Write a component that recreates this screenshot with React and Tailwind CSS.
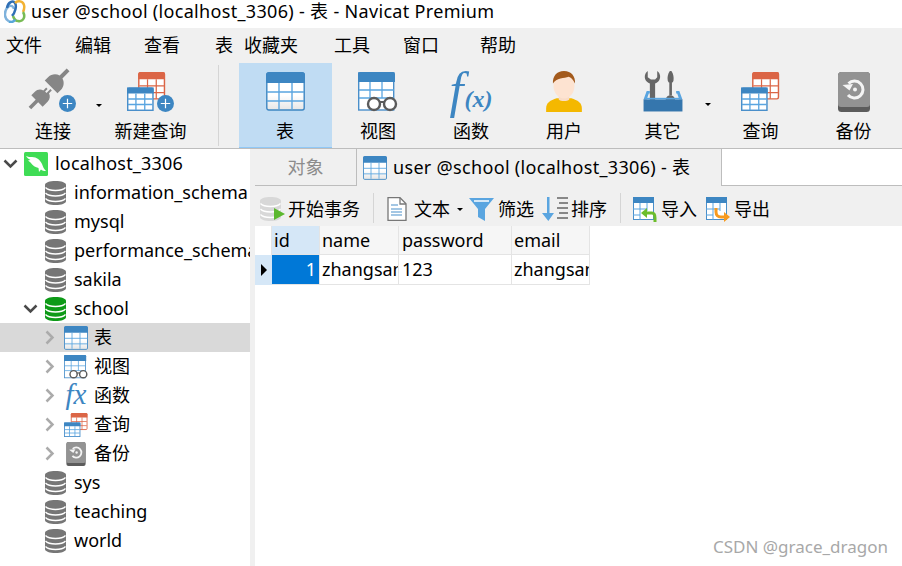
const TableIcon = ({ size = 39, color = "#3d86c2", line = "#5aa5e0" }) => (
  <svg width={size} height={size} viewBox="0 0 39 39" className="shrink-0">
    <defs>
      <linearGradient id="tableFill" x1="0" y1="0" x2="0" y2="1">
        <stop offset="0.6" stopColor="#ffffff" />
        <stop offset="1" stopColor="#e6e6e6" />
      </linearGradient>
    </defs>
    <rect x="0.8" y="1" width="37.4" height="37" rx="2" fill="url(#tableFill)" stroke={color} strokeWidth="1.4" />
    <path d="M0 11V3a3 3 0 0 1 3-3h33a3 3 0 0 1 3 3v8z" fill={color} />
    <path d="M13 11v26M26 11v26M1 20h37M1 29h37" stroke={line} strokeWidth="1.4" fill="none" />
  </svg>
);

const QueryIcon = ({ size = 38 }) => (
  <svg width={size} height={size} viewBox="0 0 38 38" className="shrink-0">
    <rect x="11.5" y="0.7" width="25" height="25.5" fill="#fff" stroke="#db6546" strokeWidth="1.4" rx="1.5" />
    <path d="M11 7V2a2 2 0 0 1 2-2h22a2 2 0 0 1 2 2v5z" fill="#db6546" />
    <path d="M20 7v19M28.500 7v19M12 13.500h24M12 20h24" stroke="#db6546" strokeWidth="1.2" fill="none" />
    <rect x="0.7" y="15.700" width="24.600" height="21.600" fill="#fff" stroke="#4a8fca" strokeWidth="1.4" />
    <path d="M0 21v-4a2 2 0 0 1 2-2h22a2 2 0 0 1 2 2v4z" fill="#3d86c2" />
    <path d="M8.700 21v16M17.300 21v16M1 26.300h24M1 31.700h24" stroke="#5aa5e0" strokeWidth="1.3" fill="none" />
  </svg>
);

const PlusBadge = ({ className = "" }) => (
  <svg width="17" height="17" viewBox="0 0 17 17" className={className}>
    <circle cx="8.500" cy="8.500" r="8.500" fill="#3d86c2" />
    <path d="M8.500 3.800v9.400M3.800 8.500h9.400" stroke="#fff" strokeWidth="1.2" />
  </svg>
);

const PlugIcon = () => (
  <svg width="46" height="42" viewBox="0 0 46 42" className="overflow-visible">
    <g transform="translate(19 17) rotate(-45)" fill="#868686">
      <rect x="-27" y="-1.800" width="11" height="3.600" />
      <path d="M-17-8h5c3.500 0 6 2 7 5h4v2h-3.500v2H1v2h-4c-1 3-3.500 5-7 5h-7z" />
      <path d="M3-9h5c4 0 8 3 9 7h10v4H17c-1 4-5 7-9 7H3z" />
    </g>
  </svg>
);

const GlassesIcon = ({ size = 40 }) => (
  <svg width={size} height={size} viewBox="0 0 40 40" className="shrink-0">
    <rect x="0.700" y="1" width="35" height="37" fill="#fff" stroke="#4a8fca" strokeWidth="1.4" />
    <path d="M0 10V2a2 2 0 0 1 2-2h33a2 2 0 0 1 2 2v8z" fill="#3d86c2" />
    <path d="M12 10v28M24 10v16M1 18h35M1 26h35" stroke="#5aa5e0" strokeWidth="1.3" fill="none" />
    <circle cx="16" cy="32" r="6" fill="#fff" stroke="#5b5b5b" strokeWidth="2.400" />
    <circle cx="32" cy="32" r="6" fill="#fff" stroke="#5b5b5b" strokeWidth="2.400" />
    <path d="M21 30h6" stroke="#5b5b5b" strokeWidth="2" />
  </svg>
);

const UserIcon = () => (
  <svg width="36" height="41" viewBox="0 0 34 39">
    <path d="M0 36c0-6 4-8 10-10h14c6 2 10 4 10 10v3H0z" fill="#f4b800" />
    <path d="M12 21h10v6c-2 2-8 2-10 0z" fill="#f8dcc8" />
    <ellipse cx="17" cy="14" rx="10" ry="12" fill="#fde3d1" />
    <path d="M6.500 12C6 5 10 0 17 0s11 5 10.500 12c-2-4-4-6-6-6.500-4 1.500-12 1-15 6.500z" fill="#a35a1c" />
  </svg>
);

const ToolsIcon = () => (
  <svg width="40" height="41" viewBox="0 0 37 39">
    <path d="M4 0C1 2 0 7 3 10c1 1 2 1.500 3 2v16h5V12c1-.5 2-1 3-2 3-3 2-8-1-10v6l-2 2H7L4 6z" fill="#666" />
    <path d="M25 0c-2 3-2.500 6-2 9 .3 1 1 2 1.500 2v12H27V11c.6 0 1.300-1 1.500-2 .4-3 0-6-2-9z" fill="#666" />
    <path d="M21 28c0-3 2-5 4.500-5s4.500 2 4.500 5z" fill="#666" />
    <path d="M0 27l3-8h3v2.500H5L3 27zM37 27l-3-8h-3v2.500h1l2 5.500z" fill="#5aa5e0" />
    <rect x="0" y="27" width="37" height="11.500" fill="#3576ad" />
    <rect x="3" y="25.500" width="31" height="1.500" fill="#5aa5e0" />
  </svg>
);

const BackupIcon = ({ width = 32, height = 40 }) => (
  <svg width={width} height={height} viewBox="0 0 32 40" className="shrink-0">
    <rect x="0" y="0" width="32" height="40" rx="3.500" fill="#5c5c5c" />
    <path d="M0 3.500A3.500 3.500 0 0 1 3.500 0h25A3.500 3.500 0 0 1 32 3.500V32a3 3 0 0 1-3 3H3a3 3 0 0 1-3-3z" fill="#939393" />
    <path d="M10.500 11.500a8.500 8.500 0 1 1-.5 11.500" fill="none" stroke="#f4f4f4" strokeWidth="3" />
    <path d="M4.500 13l7 5.500 3.500-6.500z" fill="#f4f4f4" />
    <circle cx="17" cy="17.500" r="2" fill="#f4f4f4" />
  </svg>
);

const DbIcon = ({ color = "#767676" }) => (
  <svg width="21" height="24" viewBox="0 0 21 24" className="shrink-0">
    <path d="M0 4c0-2.500 4.700-4 10.500-4S21 1.500 21 4v16c0 2.500-4.700 4-10.500 4S0 22.500 0 20z" fill={color} />
    <path d="M0.500 6.500c2 2.200 6 3 10 3s8-.8 10-3M0.500 12c2 2.200 6 3 10 3s8-.8 10-3M0.500 17.500c2 2.200 6 3 10 3s8-.8 10-3" fill="none" stroke="#fff" strokeWidth="1.300" />
  </svg>
);

const ChevronDown = () => (
  <svg width="15" height="10" viewBox="0 0 15 10" className="shrink-0">
    <path d="M1.500 1.500L7.500 7.500l6-6" fill="none" stroke="#4a4a4a" strokeWidth="2.500" />
  </svg>
);

const ChevronRight = () => (
  <svg width="10" height="15" viewBox="0 0 10 15" className="shrink-0">
    <path d="M1.500 1.500l6 6-6 6" fill="none" stroke="#ababab" strokeWidth="2.500" />
  </svg>
);

const Caret = () => <span className="w-0 h-0 border-x-[3px] border-x-transparent border-t-[3px] border-t-black" />;

const NavicatLogo = () => (
  <svg width="22" height="23" viewBox="0 0 22 23">
    <path d="M5 21.500C0 19 0 12 3 8c2-3 6-3 7 1" fill="none" stroke="#7fb2dc" strokeWidth="2.500" />
    <path d="M3 8C4 2 9 0 11 3c2 3 0 10-3 13" fill="none" stroke="#2f6fb5" strokeWidth="2.500" />
    <path d="M11 3c3-3 8-2 9 2 .5 2 0 5-1 7" fill="none" stroke="#f2b233" strokeWidth="2.500" />
    <path d="M19 12c3 5 0 10-5 9-2 0-4-2-5-5" fill="none" stroke="#78bb55" strokeWidth="2.500" />
    <path d="M5 21.500c3 1 5 0 6-2" fill="none" stroke="#58a6d8" strokeWidth="2.500" />
  </svg>
);

const Dolphin = () => (
  <svg width="24" height="24" viewBox="0 0 24 24" className="shrink-0">
    <rect width="24" height="24" rx="1.500" fill="#3fdc55" />
    <path d="M2 4c2 1 4 1 6 1 5 0 8 3 10 7 1 3 2 5 4 7-2 0-4-.5-5-1.500l-2 2.500-.5-4c-3-.5-6-2.500-8-5.500L4 8.500l2.500-.5C5 7 3 6 2 4z" fill="#fff" />
  </svg>
);

const tools = [
  { label: "表", width: "w-[93px]", icon: <TableIcon />, active: true },
  { label: "视图", width: "w-[93px]", icon: <GlassesIcon /> },
  {
    label: "函数",
    width: "w-[93px]",
    icon: (
      <span className="flex items-baseline h-[39px] font-['Liberation_Serif',serif] italic text-[#3d86c2] leading-[36px]">
        <span className="text-[50px]">f</span>
        <span className="text-[24px] ml-[1px] font-bold">(x)</span>
      </span>
    ),
  },
  { label: "用户", width: "w-[93px]", icon: <UserIcon /> },
  { label: "其它", width: "w-[104px]", icon: <ToolsIcon />, caret: true },
  { label: "查询", width: "w-[92px]", icon: <QueryIcon size={39} /> },
  { label: "备份", width: "w-[94px]", icon: <BackupIcon /> },
];

const ToolButton = ({ label, width, icon, active, caret }) => (
  <div className={`relative flex flex-col items-center h-[85px] pt-[9px] pr-[1px] ${width} ${active ? "bg-[#c0dcf3] border-b border-b-[#90c8f6]" : ""}`}>
    <div className="flex items-center justify-center h-[39px]">{icon}</div>
    <span className="mt-[8px] leading-[24px]">{label}</span>
    {caret && (
      <span className="absolute right-[4px] top-[40px] flex">
        <Caret />
      </span>
    )}
  </div>
);

const DbRow = ({ name, color, open }) => (
  <div className="flex items-center h-[29px]">
    <span className="flex shrink-0 justify-center w-[45px] pl-[15px]">{open && <ChevronDown />}</span>
    <DbIcon color={color} />
    <span className="ml-[8px] mb-[2px] whitespace-nowrap">{name}</span>
  </div>
);

const SubRow = ({ icon, name, selected }) => (
  <div className={`flex items-center h-[29px] ${selected ? "bg-[#d9d9d9]" : ""}`}>
    <span className="flex shrink-0 justify-center w-[64px] pl-[36px]">
      <ChevronRight />
    </span>
    <span className="flex shrink-0 justify-center w-[24px]">{icon}</span>
    <span className="ml-[6px] mb-[2px]">{name}</span>
  </div>
);

const ImportIcon = ({ arrow, d, head }) => (
  <span className="relative flex w-[24px] h-[24px]">
    <svg width="24" height="24" viewBox="0 0 24 24">
      <rect x="0.500" y="0.500" width="20" height="22" fill="#fff" stroke="#4a8fca" />
      <path d="M0 6V0h21v6z" fill="#3d86c2" />
      <path d="M7 6v17M14 6v8M0 12h14M0 18h7" stroke="#5aa5e0" fill="none" />
    </svg>
    <svg width="16" height="14" viewBox="0 0 16 14" className="absolute right-[0px] bottom-[-1px]">
      <path d={d} fill="none" stroke={arrow} strokeWidth="3" />
      <path d={head} fill={arrow} />
    </svg>
  </span>
);

const gridCell = "border-r border-b border-[#e4e4e4]";

export default function App() {
  return (
    <div className="relative w-[902px] h-[566px] overflow-hidden bg-white text-[18px] text-black font-['Noto_Sans','Noto_Sans_CJK_SC',sans-serif]">
      <div className="flex items-start h-[28px] bg-white">
        <span className="ml-[4px] flex"><NavicatLogo /></span>
        <span className="ml-[5px] -mt-[1px] leading-[24px] tracking-[0.32px] whitespace-nowrap">user @school (localhost_3306) - 表 - Navicat Premium</span>
      </div>

      <div className="flex items-center h-[35px] bg-[#f0f0f0] pb-[1px]">
        <span className="ml-[6px]">文件</span>
        <span className="ml-[33px]">编辑</span>
        <span className="ml-[33px]">查看</span>
        <span className="ml-[35px]">表</span>
        <span className="ml-[11px]">收藏夹</span>
        <span className="ml-[36px]">工具</span>
        <span className="ml-[33px]">窗口</span>
        <span className="ml-[41px]">帮助</span>
      </div>

      <div className="flex h-[86px] bg-[#f0f0f0] border-b border-b-[#bdbdbd]">
        <div className="relative flex flex-col items-center w-[92px] h-[85px] pt-[9px] pl-[14px]">
          <div className="relative h-[39px] w-[46px]">
            <PlugIcon />
            <PlusBadge className="absolute left-[29px] top-[23px]" />
          </div>
          <span className="mt-[8px] leading-[24px]">连接</span>
        </div>
        <span className="flex mt-[41px] ml-[4px] w-[14px]"><Caret /></span>
        <div className="flex flex-col items-center w-[82px] h-[85px] pt-[9px]">
          <div className="relative h-[39px] w-[48px]">
            <QueryIcon size={39} />
            <PlusBadge className="absolute left-[30px] top-[23px]" />
          </div>
          <span className="mt-[8px] -ml-[1px] leading-[24px] whitespace-nowrap">新建查询</span>
        </div>
        <span className="ml-[26px] mr-[20px] mt-[2px] w-[1px] h-[81px] bg-[#d5d5d5]" />
        {tools.map((tool) => (
          <ToolButton key={tool.label} {...tool} />
        ))}
      </div>

      <div className="flex h-[417px]">
        <div className="w-[250px] overflow-hidden leading-[24px]">
          <div className="flex items-center h-[29px]">
            <span className="flex shrink-0 justify-center w-[20px]"><ChevronDown /></span>
            <span className="ml-[4px] flex"><Dolphin /></span>
            <span className="ml-[7px] mb-[2px] tracking-[0.2px]">localhost_3306</span>
          </div>
          <DbRow name="information_schema" />
          <DbRow name="mysql" />
          <DbRow name="performance_schema" />
          <DbRow name="sakila" />
          <DbRow name="school" color="#0d9a17" open />
          <SubRow name="表" selected icon={<TableIcon size={24} />} />
          <SubRow name="视图" icon={<GlassesIcon size={24} />} />
          <SubRow
            name="函数"
            icon={<span className="font-['Liberation_Serif',serif] italic text-[#3d86c2] text-[29px] leading-[24px] w-[24px] text-center -mt-[3px]">fx</span>}
          />
          <SubRow name="查询" icon={<QueryIcon size={24} />} />
          <SubRow name="备份" icon={<BackupIcon width={20} height={24} />} />
          <DbRow name="sys" />
          <DbRow name="teaching" />
          <DbRow name="world" />
        </div>

        <div className="w-[5px] bg-[#f0f0f0]" />

        <div className="flex-1 flex flex-col">
          <div className="flex h-[37px] bg-white">
            <div className="flex items-center justify-center w-[102px] bg-[#f0f0f0] border-r border-b border-[#bdbdbd] text-[#8c8c8c]">对象</div>
            <div className="flex items-center w-[365px] bg-[#f0f0f0] border-r border-[#bdbdbd] pl-[6px]">
              <TableIcon size={24} />
              <span className="ml-[6px] tracking-[0.32px] whitespace-nowrap">user @school (localhost_3306) - 表</span>
            </div>
            <div className="flex-1 border-b border-[#bdbdbd]" />
          </div>

          <div className="flex items-center h-[40px] bg-[#f0f0f0] pl-[5px] pt-[6px] whitespace-nowrap">
            <span className="relative flex w-[24px] h-[24px]">
              <DbIcon color="#d8d8d8" />
              <span className="absolute right-[-1px] bottom-[1px] w-0 h-0 border-y-[6px] border-y-transparent border-l-[11px] border-l-[#5cb82f]" />
            </span>
            <span className="ml-[4px]">开始事务</span>
            <span className="mx-[13px] w-[1px] h-[30px] -mt-[3px] bg-[#d5d5d5]" />
            <svg width="20" height="24" viewBox="0 0 20 24">
              <path d="M1 .7h12l6 6v16.600H1z" fill="#fff" stroke="#777" strokeWidth="1.300" />
              <path d="M13 1v6h6" fill="none" stroke="#777" strokeWidth="1.300" />
              <path d="M4 8h7M4 12h11M4 15h11M4 18h11" stroke="#4a8fca" strokeWidth="1.200" />
            </svg>
            <span className="ml-[7px]">文本</span>
            <span className="ml-[7px] mr-[6px] flex"><Caret /></span>
            <svg width="25" height="25" viewBox="0 0 25 25">
              <path d="M0 1h25l-9 11v12l-7-4v-8z" fill="#5aa5e0" />
              <path d="M5 4h15" stroke="#fff" strokeWidth="1.500" />
            </svg>
            <span className="ml-[4px]">筛选</span>
            <svg width="29" height="25" viewBox="0 0 29 25" className="ml-[8px]">
              <path d="M5 0h2.500v16H12l-5.700 8L0 16h5z" fill="#5aa5e0" />
              <path d="M15 1h11M17 6h9M15 11h11M17 16h9M15 21h11" stroke="#666" strokeWidth="1.300" />
            </svg>
            <span>排序</span>
            <span className="ml-[13px] mr-[12px] w-[1px] h-[30px] -mt-[3px] bg-[#d5d5d5]" />
            <ImportIcon arrow="#6cbd2b" d="M4 5h7c2 0 3 2 3 5v4" head="M0 5l6-5v10z" />
            <span className="ml-[4px]">导入</span>
            <span className="ml-[9px] flex"><ImportIcon arrow="#f79a1e" d="M2 0v4c0 3 2 5 5 5h5" head="M16 9l-6-5v10z" /></span>
            <span className="ml-[4px]">导出</span>
          </div>

          <div className="grid grid-cols-[17px_48px_79px_113px_78px] grid-rows-[29px_30px] w-fit leading-[28px]">
            <div className="bg-white border-r border-r-[#e4e4e4]" />
            <div className={`bg-[#d5e7f7] pl-[2px] ${gridCell}`}>id</div>
            <div className={`bg-[#f6f6f6] pl-[2px] ${gridCell}`}>name</div>
            <div className={`bg-[#f6f6f6] pl-[3px] ${gridCell}`}>password</div>
            <div className={`bg-[#f6f6f6] pl-[2px] ${gridCell}`}>email</div>
            <div className="flex items-center justify-center bg-[#d5e7f7]">
              <span className="w-0 h-0 border-y-[6px] border-y-transparent border-l-[6px] border-l-black" />
            </div>
            <div className="bg-[#0078d7] text-white text-right pr-[3px] border-r border-b border-r-[#e4e4e4] border-b-[#e4e4e4]">1</div>
            <div className={`overflow-hidden whitespace-nowrap pl-[2px] ${gridCell}`}>zhangsan</div>
            <div className={`pl-[3px] ${gridCell}`}>123</div>
            <div className={`overflow-hidden whitespace-nowrap pl-[2px] ${gridCell}`}>zhangsan</div>
          </div>
        </div>
      </div>

      <span className="absolute right-[14px] bottom-[8px] text-[17px] leading-[22px] text-[#a8a8a8] whitespace-nowrap">CSDN @grace_dragon</span>
    </div>
  );
}
